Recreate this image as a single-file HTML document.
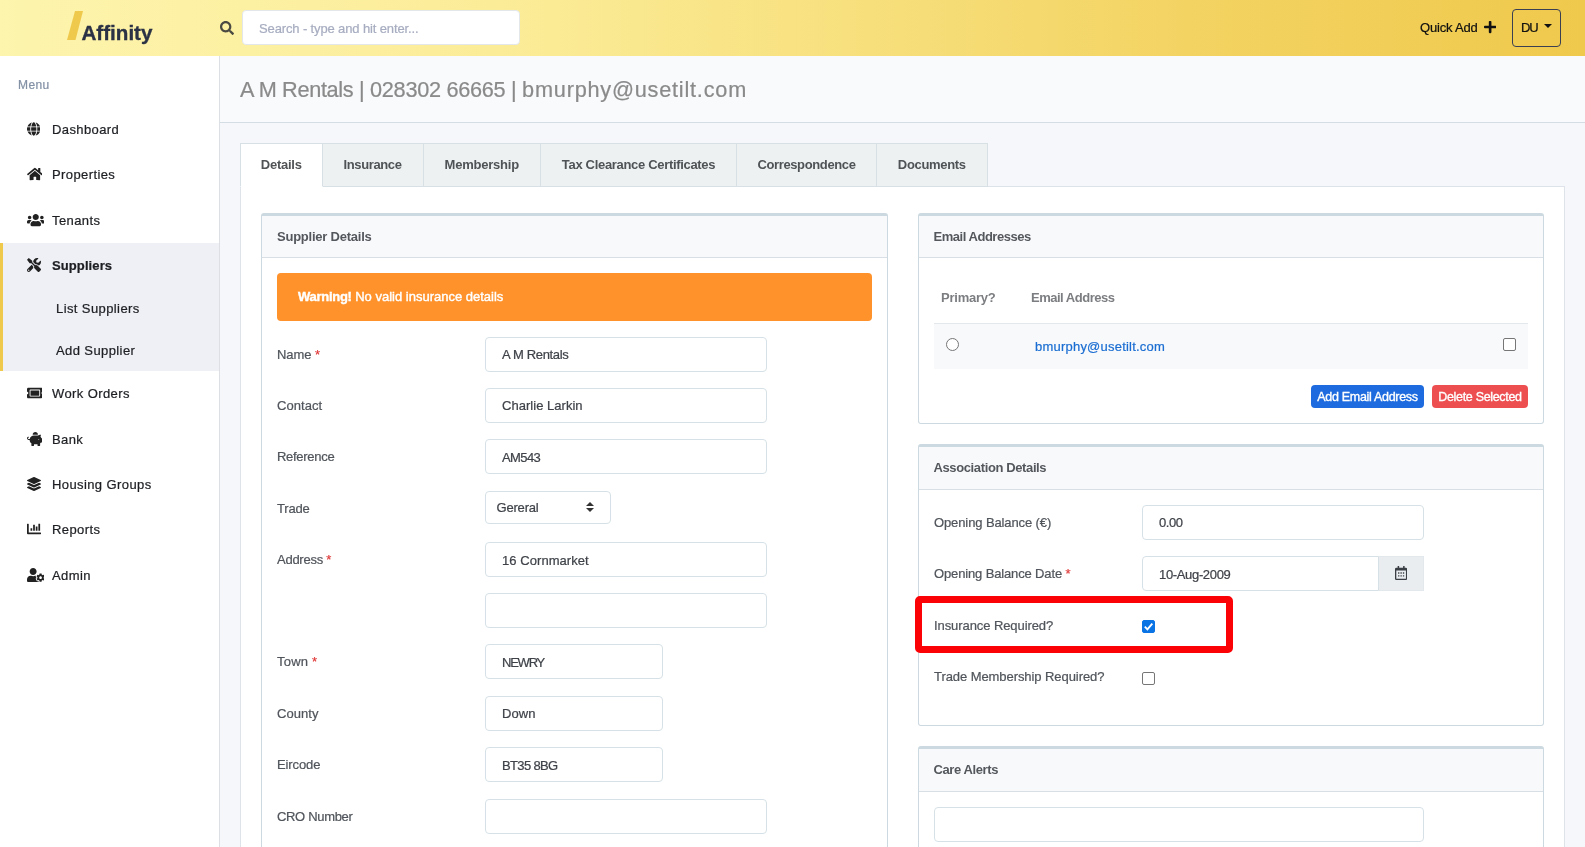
<!DOCTYPE html>
<html lang="en">
<head>
<meta charset="utf-8">
<title>A M Rentals</title>
<style>
*{box-sizing:border-box}
html,body{margin:0;padding:0}
body{width:1585px;height:847px;overflow:hidden;background:#f5f7fb;font-family:"Liberation Sans",sans-serif;font-size:13px;color:#4a4f55;position:relative;-webkit-text-stroke:.22px}
#hdr,#side,#ph,#tabs,.card,.lbl,.inp,.th,.btn,#alert,#email{will-change:transform}
/* header */
#hdr{position:absolute;left:0;top:0;width:1585px;height:56px;background:linear-gradient(90deg,#fdf4ad 0%,#fbeb95 35%,#f3d362 75%,#efc94c 100%)}
#logo-slash{position:absolute;left:67px;top:11px;width:16px;height:29px}
#logo-text{position:absolute;left:81.500px;top:18px;font-weight:bold;font-size:20.600px;line-height:30px;color:#2b3245;letter-spacing:0;-webkit-text-stroke:.35px #2b3245}
#srch-ic{position:absolute;left:220px;top:21px;width:14px;height:14px}
#srch{position:absolute;left:242px;top:10px;width:278px;height:35px;background:#fff;border:1px solid #e4e7ea;border-radius:4px;padding:0 16px;line-height:35px;color:#a7adc0;font-size:13px;letter-spacing:-.13px}
#qa{position:absolute;left:1420px;top:18px;line-height:20px;color:#111;font-size:13px;letter-spacing:-.2px}
#plus{position:absolute;left:1484.200px;top:20px;width:12.250px;height:14px}
#du{position:absolute;left:1512px;top:9px;width:49px;height:38px;border:1px solid #3a3f52;border-radius:4px;color:#111;line-height:36px;padding-left:8px;font-size:13px;letter-spacing:-1.2px}
#du i{position:absolute;left:31px;top:14px;width:0;height:0;border-left:4px solid transparent;border-right:4px solid transparent;border-top:4px solid #111}
/* sidebar */
#side{position:absolute;left:0;top:56px;width:220px;height:791px;background:#fff;border-right:1px solid #dce0e5}
#menu{position:absolute;left:18px;top:21px;color:#8391a5;font-size:12px;line-height:16px;letter-spacing:.4px}
.nv{position:absolute;left:0;width:219px;height:44px;color:#1d1f23;font-size:13px;line-height:44px;padding-top:1px;padding-left:52px;letter-spacing:.4px}
.nv svg{position:absolute;left:26.500px;top:15px;height:14px;fill:#222}
.sub{padding-left:56px}
#grp{position:absolute;left:0;top:187px;width:219px;height:128px;background:#eef0f5;border-left:3px solid #efc94c}
/* page header */
#ph{position:absolute;left:220px;top:56px;width:1365px;height:67px;background:#f9fafc;border-bottom:1px solid #d3dde3}
#ph h1{position:absolute;left:20px;top:17px;margin:0;font-weight:normal;font-size:21.700px;line-height:34px;color:#8a8a8a;white-space:nowrap;letter-spacing:.125px}
/* tabs */
#tabs{position:absolute;left:240px;top:143px;height:44px;display:flex}
.tab{height:44px;border:1px solid #d6e0e5;border-left-width:0;background:#edf1f2;color:#505356;font-weight:bold;font-size:13px;line-height:42px;letter-spacing:-.2px;text-align:center;white-space:nowrap}
.tab.act{background:#fff;border-left-width:1px;border-bottom-color:#fff}
#tc{position:absolute;left:240px;top:186px;width:1325px;height:700px;background:#fff;border:1px solid #dde3e8}
/* cards */
.card{position:absolute;background:#fff;border:1px solid #ccd9e1;border-top:3px solid #ccd9e1;border-radius:3px}
.ch{height:42px;background:#f8f9fb;border-bottom:1px solid #d8e0e6;font-weight:bold;color:#54585d;line-height:41px;padding-left:15px;font-size:13px;letter-spacing:-.2px}
.lbl{position:absolute;left:15px;color:#50555b;white-space:nowrap;line-height:20px}
.req{color:#e03b3b}
.inp{position:absolute;background:#fff;border:1px solid #d5e1e6;border-radius:4px;height:35px;line-height:33px;padding-left:16px;color:#3f4349;white-space:nowrap}
#alert{position:absolute;left:277px;top:273px;width:595px;height:48px;background:#ff922b;border-radius:4px;color:#fff;line-height:47px;padding-left:21px;white-space:nowrap;-webkit-text-stroke:.4px}
.sel{height:33px;line-height:31px;padding-left:10.500px}
.sel svg{position:absolute;left:100px;top:10px;width:8px;height:10px}
.th{position:absolute;font-weight:bold;color:#7b7d80;line-height:20px;white-space:nowrap}
#trow{position:absolute;left:934px;top:323px;width:594px;height:46px;background:#f8f9fb;border-top:1px solid #e3e8ec}
.radio{position:absolute;width:13px;height:13px;border:1px solid #767676;border-radius:50%;background:#fff}
.cb{position:absolute;width:13px;height:13px;border:1px solid #767676;border-radius:2px;background:#fff}
.cb.on{background:#0b74e5;border-color:#0b74e5}
.cb svg{position:absolute;left:-1px;top:-1px;width:13px;height:13px}
#email{position:absolute;left:1035px;top:337px;line-height:20px;color:#1b6ed2;white-space:nowrap}
.btn{position:absolute;height:23px;border-radius:4px;color:#fff;line-height:25px;-webkit-text-stroke:.35px;text-align:center;white-space:nowrap;font-size:12.500px}
#addon{position:absolute;left:1378px;top:556px;width:46px;height:35px;background:#e9edf0;border:1px solid #e3e8ec;border-left-color:#d5e1e6}
#addon svg{position:absolute;left:16px;top:8.500px;width:12.250px;height:14px}
#hl{position:absolute;left:915px;top:596px;width:318px;height:57px;border:7px solid #fb0207;border-left-width:7.500px;border-radius:5px}
#alert b{letter-spacing:-.28px}
.tab,.ch,.th{-webkit-text-stroke:0}
</style>
</head>
<body>
<div id="hdr">
  <svg id="logo-slash" viewBox="0 0 16 29"><polygon points="8,0 16,0 8.5,29 0,29" fill="#efc94c"/></svg>
  <div id="logo-text">Affinity</div>
  <svg id="srch-ic" viewBox="0 0 512 512"><path fill="#4a4a42" d="M505 442.700L405.300 343c-4.500-4.500-10.600-7-17-7H372c27.600-35.300 44-79.700 44-128C416 93.100 322.900 0 208 0S0 93.100 0 208s93.100 208 208 208c48.300 0 92.700-16.400 128-44v16.300c0 6.400 2.500 12.500 7 17l99.700 99.700c9.400 9.400 24.600 9.400 33.900 0l28.300-28.300c9.400-9.400 9.400-24.600.1-34zM208 336c-70.700 0-128-57.200-128-128 0-70.700 57.200-128 128-128 70.700 0 128 57.200 128 128 0 70.700-57.200 128-128 128z"/></svg>
  <div id="srch">Search - type and hit enter...</div>
  <div id="qa">Quick Add</div>
  <svg id="plus" viewBox="0 0 448 512"><path fill="#111" d="M416 208H272V64c0-17.670-14.330-32-32-32h-32c-17.670 0-32 14.330-32 32v144H32c-17.670 0-32 14.330-32 32v32c0 17.670 14.330 32 32 32h144v144c0 17.670 14.330 32 32 32h32c17.670 0 32-14.330 32-32V304h144c17.670 0 32-14.330 32-32v-32c0-17.670-14.330-32-32-32z"/></svg>
  <div id="du">DU<i></i></div>
</div>

<div id="side">
  <div id="menu">Menu</div>
  <div id="grp"></div>
  <div class="nv" style="top:51px"><svg viewBox="0 0 496 512" style="width:13.56px"><path d="M336.5 160C322 70.700 287.800 8 248 8s-74 62.700-88.500 152h177zM152 256c0 22.200 1.200 43.500 3.300 64h185.300c2.100-20.500 3.300-41.800 3.300-64s-1.200-43.500-3.300-64H155.300c-2.100 20.500-3.300 41.800-3.300 64zm324.700-96c-28.600-67.900-86.500-120.400-158-141.600 24.400 33.800 41.200 84.700 50 141.600h108zM177.200 18.400C105.800 39.600 47.800 92.100 19.300 160h108c8.700-56.900 25.500-107.800 49.900-141.600zM487.400 192H372.700c2.100 21 3.300 42.500 3.300 64s-1.200 43-3.300 64h114.600c5.500-20.500 8.600-41.800 8.600-64s-3.100-43.500-8.500-64zM120 256c0-21.500 1.200-43 3.300-64H8.600C3.200 212.500 0 233.800 0 256s3.200 43.500 8.600 64h114.600c-2-21-3.200-42.500-3.200-64zm39.500 96c14.500 89.300 48.700 152 88.500 152s74-62.700 88.500-152h-177zm159.300 141.600c71.400-21.200 129.400-73.700 158-141.600h-108c-8.800 56.900-25.600 107.800-50 141.600zM19.300 352c28.600 67.900 86.500 120.400 158 141.600-24.400-33.800-41.200-84.700-50-141.600h-108z"/></svg>Dashboard</div>
  <div class="nv" style="top:96px"><svg viewBox="0 0 576 512" style="width:15.75px"><path d="M280.370 148.260L96 300.110V464a16 16 0 0 0 16 16l112.060-.290a16 16 0 0 0 15.920-16V368a16 16 0 0 1 16-16h64a16 16 0 0 1 16 16v95.640a16 16 0 0 0 16 16.050L464 480a16 16 0 0 0 16-16V300L295.670 148.260a12.190 12.190 0 0 0-15.300 0zM571.600 251.470L488 182.560V44.050a12 12 0 0 0-12-12h-56a12 12 0 0 0-12 12v72.610L318.470 43a48 48 0 0 0-61 0L4.340 251.470a12 12 0 0 0-1.600 16.900l25.500 31A12 12 0 0 0 45.150 301l235.220-193.740a12.190 12.190 0 0 1 15.300 0L530.900 301a12 12 0 0 0 16.900-1.600l25.500-31a12 12 0 0 0-1.700-16.930z"/></svg>Properties</div>
  <div class="nv" style="top:142px"><svg viewBox="0 0 640 512" style="width:17.50px"><path d="M96 224c35.300 0 64-28.700 64-64s-28.700-64-64-64-64 28.700-64 64 28.700 64 64 64zm448 0c35.300 0 64-28.700 64-64s-28.700-64-64-64-64 28.700-64 64 28.700 64 64 64zm32 32h-64c-17.600 0-33.500 7.100-45.100 18.600 40.300 22.100 68.900 62 75.100 109.400h66c17.700 0 32-14.300 32-32v-32c0-35.300-28.700-64-64-64zm-256 0c61.900 0 112-50.100 112-112S381.900 32 320 32 208 82.100 208 144s50.100 112 112 112zm76.800 32h-8.300c-20.800 10-43.900 16-68.500 16s-47.600-6-68.500-16h-8.300C179.600 288 128 339.600 128 403.200V432c0 26.500 21.500 48 48 48h288c26.500 0 48-21.500 48-48v-28.800c0-63.600-51.600-115.200-115.200-115.200zm-223.700-13.400C161.500 263.100 145.600 256 128 256H64c-35.300 0-64 28.700-64 64v32c0 17.700 14.300 32 32 32h65.900c6.300-47.400 34.900-87.300 75.200-109.400z"/></svg>Tenants</div>
  <div class="nv" style="top:187px;font-weight:bold;letter-spacing:.1px"><svg viewBox="0 0 512 512" style="width:14.00px"><path d="M501.100 395.700L384 278.600c-23.100-23.100-57.600-27.600-85.400-13.900L192 158.100V96L64 0 0 64l96 128h62.100l106.600 106.600c-13.600 27.800-9.200 62.300 13.900 85.400l117.100 117.100c14.600 14.600 38.200 14.600 52.700 0l52.700-52.700c14.500-14.600 14.500-38.200 0-52.700zM331.700 225c28.300 0 54.900 11 74.900 31l19.400 19.400c15.800-6.900 30.800-16.500 43.800-29.500 37.100-37.100 49.700-89.300 37.900-136.700-2.200-9-13.500-12.100-20.100-5.500l-74.400 74.400-67.900-11.300L334 98.900l74.400-74.400c6.600-6.600 3.400-17.900-5.700-20.200-47.400-11.700-99.600.9-136.600 37.900-28.500 28.500-41.900 66.100-41.200 103.600l82.100 82.100c8.100-1.900 16.500-2.900 24.700-2.900zm-103.900 82l-56.700-56.700L18.700 402.800c-25 25-25 65.500 0 90.500s65.500 25 90.500 0l123.600-123.600c-7.600-19.900-9.900-41.600-5-62.700zM64 472c-13.200 0-24-10.800-24-24 0-13.300 10.700-24 24-24s24 10.700 24 24c0 13.200-10.700 24-24 24z"/></svg>Suppliers</div>
  <div class="nv sub" style="top:230px">List Suppliers</div>
  <div class="nv sub" style="top:272px">Add Supplier</div>
  <div class="nv" style="top:315px"><svg viewBox="0 0 576 512" style="width:15.75px"><path d="M128 160h320v192H128V160zm400 96c0 26.510 21.490 48 48 48v96c0 26.510-21.490 48-48 48H48c-26.510 0-48-21.490-48-48v-96c26.510 0 48-21.490 48-48s-21.490-48-48-48v-96c0-26.510 21.490-48 48-48h480c26.510 0 48 21.490 48 48v96c-26.510 0-48 21.490-48 48zm-48-104c0-13.255-10.745-24-24-24H120c-13.255 0-24 10.745-24 24v208c0 13.255 10.745 24 24 24h336c13.255 0 24-10.745 24-24V152z"/></svg>Work Orders</div>
  <div class="nv" style="top:361px"><svg viewBox="0 0 576 512" style="width:15.75px"><path d="M560 224h-29.500c-8.800-20-21.600-37.700-37.400-52.500L512 96h-32c-29.400 0-55.400 13.500-73 34.300-7.600-1.100-15.100-2.300-23-2.300H256c-77.400 0-141.900 55-156.800 128H56c-14.800 0-26.500-13.500-23.500-28.800C34.700 215.800 45.400 208 57 208h1c3.300 0 6-2.700 6-6v-20c0-3.300-2.700-6-6-6-28.500 0-53.900 20.400-57.500 48.600C-3.900 258.800 22.700 288 56 288h40c0 52.200 25.400 98.100 64 127.300V496c0 8.800 7.200 16 16 16h64c8.800 0 16-7.200 16-16v-48h128v48c0 8.800 7.200 16 16 16h64c8.800 0 16-7.200 16-16v-80.700c11.800-8.900 22.300-19.400 31.300-31.300H560c8.800 0 16-7.200 16-16V240c0-8.800-7.200-16-16-16zm-128 64c-8.800 0-16-7.200-16-16s7.200-16 16-16 16 7.200 16 16-7.200 16-16 16zM256 96h128c5.400 0 10.700.4 15.900.8 0-.3.100-.5.100-.8 0-53-43-96-96-96s-96 43-96 96c0 2.100.5 4.100.6 6.200 15.200-3.900 31-6.200 47.400-6.200z"/></svg>Bank</div>
  <div class="nv" style="top:406px"><svg viewBox="0 0 512 512" style="width:14.00px"><path d="M12.410 148.020l232.940 105.670c6.800 3.090 14.490 3.090 21.290 0l232.940-105.670c16.550-7.510 16.550-32.520 0-40.030L266.650 2.310a25.607 25.607 0 0 0-21.290 0L12.410 107.980c-16.550 7.510-16.550 32.530 0 40.040zm487.180 88.280l-58.090-26.330-161.640 73.270c-7.560 3.430-15.590 5.170-23.860 5.170s-16.290-1.740-23.860-5.170L70.510 209.970l-58.100 26.330c-16.550 7.500-16.550 32.500 0 40l232.940 105.590c6.800 3.080 14.490 3.080 21.290 0L499.590 276.300c16.550-7.500 16.550-32.500 0-40zm0 127.800l-57.870-26.230-161.860 73.370c-7.560 3.430-15.590 5.170-23.860 5.170s-16.290-1.740-23.860-5.170L70.290 337.870 12.410 364.100c-16.550 7.500-16.550 32.500 0 40l232.940 105.590c6.800 3.080 14.490 3.080 21.290 0L499.590 404.100c16.550-7.500 16.550-32.500 0-40z"/></svg>Housing Groups</div>
  <div class="nv" style="top:451px"><svg viewBox="0 0 512 512" style="width:14.00px"><path d="M332.800 320h38.400c6.400 0 12.800-6.400 12.800-12.800V172.800c0-6.400-6.400-12.800-12.800-12.800h-38.400c-6.400 0-12.800 6.400-12.800 12.800v134.400c0 6.400 6.400 12.800 12.800 12.800zm96 0h38.400c6.400 0 12.800-6.400 12.800-12.800V76.800c0-6.400-6.400-12.800-12.800-12.800h-38.400c-6.400 0-12.800 6.400-12.800 12.800v230.400c0 6.400 6.400 12.800 12.800 12.800zm-288 0h38.400c6.400 0 12.800-6.400 12.800-12.800v-70.400c0-6.400-6.400-12.800-12.800-12.800h-38.400c-6.400 0-12.800 6.400-12.800 12.800v70.400c0 6.400 6.400 12.800 12.800 12.800zm96 0h38.400c6.400 0 12.800-6.400 12.800-12.800V108.800c0-6.400-6.400-12.800-12.800-12.800h-38.400c-6.400 0-12.800 6.400-12.800 12.800v198.400c0 6.400 6.400 12.800 12.800 12.800zM496 384H64V80c0-8.840-7.160-16-16-16H16C7.160 64 0 71.160 0 80v336c0 17.670 14.330 32 32 32h464c8.840 0 16-7.160 16-16v-32c0-8.840-7.160-16-16-16z"/></svg>Reports</div>
  <div class="nv" style="top:497px"><svg viewBox="0 0 640 512" style="width:17.50px"><path d="M610.500 373.300c2.600-14.100 2.600-28.500 0-42.600l25.800-14.900c3-1.700 4.300-5.200 3.300-8.500-6.700-21.600-18.200-41.200-33.200-57.400-2.300-2.500-6-3.100-9-1.400l-25.800 14.900c-10.900-9.300-23.400-16.500-36.900-21.300v-29.800c0-3.400-2.400-6.400-5.700-7.100-22.300-5-45-4.800-66.200 0-3.300.7-5.700 3.700-5.700 7.100v29.800c-13.500 4.800-26 12-36.900 21.300l-25.800-14.900c-2.900-1.700-6.700-1.100-9 1.400-15 16.200-26.500 35.800-33.200 57.400-1 3.300.4 6.800 3.300 8.500l25.800 14.900c-2.600 14.100-2.600 28.500 0 42.600l-25.800 14.900c-3 1.700-4.300 5.200-3.300 8.500 6.700 21.600 18.200 41.100 33.200 57.400 2.300 2.500 6 3.100 9 1.400l25.800-14.900c10.900 9.300 23.400 16.500 36.900 21.300v29.800c0 3.400 2.400 6.400 5.700 7.100 22.300 5 45 4.800 66.200 0 3.300-.7 5.700-3.700 5.700-7.100v-29.800c13.500-4.800 26-12 36.900-21.300l25.800 14.900c2.900 1.700 6.700 1.100 9-1.400 15-16.200 26.500-35.800 33.200-57.400 1-3.300-.4-6.800-3.300-8.500l-25.800-14.900zM496 400.500c-26.800 0-48.500-21.800-48.500-48.500s21.800-48.500 48.500-48.500 48.500 21.800 48.500 48.500-21.700 48.500-48.500 48.500zM224 256c70.700 0 128-57.300 128-128S294.700 0 224 0 96 57.300 96 128s57.300 128 128 128zm201.200 226.500c-2.300-1.200-4.600-2.600-6.800-3.900l-7.900 4.600c-6 3.400-12.800 5.300-19.600 5.300-10.900 0-21.400-4.600-28.900-12.600-18.300-19.800-32.300-43.900-40.200-69.600-5.500-17.700 1.900-36.400 17.900-45.700l7.900-4.600c-.1-2.600-.1-5.200 0-7.800l-7.900-4.600c-16-9.200-23.400-28-17.900-45.700.9-2.900 2.200-5.800 3.200-8.700-3.800-.3-7.500-1.200-11.400-1.200h-16.700c-22.200 10.200-46.900 16-72.900 16s-50.600-5.800-72.900-16h-16.700C60.200 288 0 348.200 0 422.400V464c0 26.500 21.500 48 48 48h352c10.100 0 19.500-3.200 27.200-8.500-1.200-3.800-2-7.700-2-11.800v-9.200z"/></svg>Admin</div>
</div>

<div id="ph"><h1><span style="letter-spacing:-.325px">A M Rentals | </span><span style="letter-spacing:-.29px">028302 66665 | </span><span style="letter-spacing:.78px">bmurphy@usetilt.com</span></h1></div>

<div id="tc"></div>
<div id="tabs">
  <div class="tab act" style="width:82.500px;letter-spacing:-0.25px">Details</div>
  <div class="tab" style="width:101px;letter-spacing:-0.37px">Insurance</div>
  <div class="tab" style="width:117.500px;letter-spacing:-0.23px">Membership</div>
  <div class="tab" style="width:196px;letter-spacing:-0.32px">Tax Clearance Certificates</div>
  <div class="tab" style="width:140px;letter-spacing:-0.37px">Correspondence</div>
  <div class="tab" style="width:110.500px;letter-spacing:-0.33px">Documents</div>
</div>

<!-- left card -->
<div class="card" id="c1" style="left:261px;top:213px;width:627px;height:700px">
  <div class="ch" style="letter-spacing:-0.23px">Supplier Details</div>
</div>
<div id="alert"><b>Warning!</b> No valid insurance details</div>
<div class="lbl" style="top:345px;left:277px;letter-spacing:-0.07px">Name <span class="req">*</span></div>
<div class="inp" style="left:485px;top:337px;width:282px;letter-spacing:-0.33px">A M Rentals</div>
<div class="lbl" style="top:396px;left:277px;letter-spacing:0.06px">Contact</div>
<div class="inp" style="left:485px;top:388px;width:282px;letter-spacing:0.03px">Charlie Larkin</div>
<div class="lbl" style="top:447px;left:277px;letter-spacing:-0.29px">Reference</div>
<div class="inp" style="left:485px;top:439px;width:282px;letter-spacing:-0.61px;line-height:35px">AM543</div>
<div class="lbl" style="top:499px;left:277px;letter-spacing:-0.18px">Trade</div>
<div class="inp sel" style="left:485px;top:491px;width:126px;letter-spacing:-0.19px">Gereral<svg viewBox="0 0 8 10"><path d="M0 4l4-4 4 4zM0 6h8l-4 4z" fill="#333"/></svg></div>
<div class="lbl" style="top:550px;left:277px;letter-spacing:-0.26px">Address <span class="req">*</span></div>
<div class="inp" style="left:485px;top:542px;width:282px;letter-spacing:0.06px;line-height:35px">16 Cornmarket</div>
<div class="inp" style="left:485px;top:593px;width:282px"></div>
<div class="lbl" style="top:652px;left:277px;letter-spacing:0.21px">Town <span class="req">*</span></div>
<div class="inp" style="left:485px;top:644px;width:178px;letter-spacing:-1.22px;line-height:35px">NEWRY</div>
<div class="lbl" style="top:704px;left:277px;letter-spacing:0.07px">County</div>
<div class="inp" style="left:485px;top:696px;width:178px;letter-spacing:0.04px">Down</div>
<div class="lbl" style="top:755px;left:277px;letter-spacing:-0.11px">Eircode</div>
<div class="inp" style="left:485px;top:747px;width:178px;letter-spacing:-0.65px;line-height:35px">BT35 8BG</div>
<div class="lbl" style="top:807px;left:277px;letter-spacing:-0.33px">CRO Number</div>
<div class="inp" style="left:485px;top:799px;width:282px"></div>

<!-- right cards -->
<div class="card" id="c2" style="left:918px;top:213px;width:626px;height:211px">
  <div class="ch" style="padding-left:14.500px;letter-spacing:-0.47px">Email Addresses</div>
</div>
<div class="th" style="left:941px;top:288px;letter-spacing:-0.23px">Primary?</div>
<div class="th" style="left:1031px;top:288px;letter-spacing:-0.49px">Email Address</div>
<div id="trow"></div>
<div class="radio" style="left:946px;top:338px"></div>
<div id="email" style="letter-spacing:.22px">bmurphy@usetilt.com</div>
<div class="cb" style="left:1503px;top:338px"></div>
<div class="btn" style="left:1311px;top:385px;width:113px;background:#1d6bde;letter-spacing:-0.31px">Add Email Address</div>
<div class="btn" style="left:1432px;top:385px;width:96px;background:#ed4f51;letter-spacing:-0.32px">Delete Selected</div>

<div class="card" id="c3" style="left:918px;top:444px;width:626px;height:282px">
  <div class="ch" style="padding-left:14.500px;letter-spacing:-0.38px;height:43px;line-height:42px">Association Details</div>
</div>
<div class="lbl" style="top:513px;left:933.500px;letter-spacing:-0.11px">Opening Balance (€)</div>
<div class="inp" style="left:1142px;top:505px;width:282px;letter-spacing:-0.43px">0.00</div>
<div class="lbl" style="top:564px;left:933.500px;letter-spacing:-0.14px">Opening Balance Date <span class="req">*</span></div>
<div class="inp" style="left:1142px;top:556px;width:237px;border-radius:4px 0 0 4px;line-height:35px;letter-spacing:-0.34px">10-Aug-2009</div>
<div id="addon"><svg viewBox="0 0 448 512"><path fill="#3a3f45" fill-rule="evenodd" d="M96 16a28 28 0 0 1 56 0v48h144V16a28 28 0 0 1 56 0v48h48a48 48 0 0 1 48 48v352a48 48 0 0 1-48 48H48a48 48 0 0 1-48-48V112a48 48 0 0 1 48-48h48zM48 160v304h352V160zM112 232h48v48h-48zm88 0h48v48h-48zm88 0h48v48h-48zM112 336h48v48h-48zm88 0h48v48h-48zm88 0h48v48h-48z"/></svg></div>
<div class="lbl" style="top:616px;left:933.500px;letter-spacing:-0.08px">Insurance Required?</div>
<div class="cb on" style="left:1142px;top:620px"><svg viewBox="0 0 13 13"><path d="M2.800 6.700l2.600 2.600 4.900-5.600" fill="none" stroke="#fff" stroke-width="1.900"/></svg></div>
<div id="hl"></div>
<div class="lbl" style="top:667px;left:933.500px;letter-spacing:-0.07px">Trade Membership Required?</div>
<div class="cb" style="left:1142px;top:672px"></div>

<div class="card" id="c4" style="left:918px;top:746px;width:626px;height:200px">
  <div class="ch" style="padding-left:14.500px;letter-spacing:-0.4px;height:43px;line-height:42px">Care Alerts</div>
</div>
<div class="inp" style="left:934px;top:807px;width:490px"></div>
</body>
</html>
